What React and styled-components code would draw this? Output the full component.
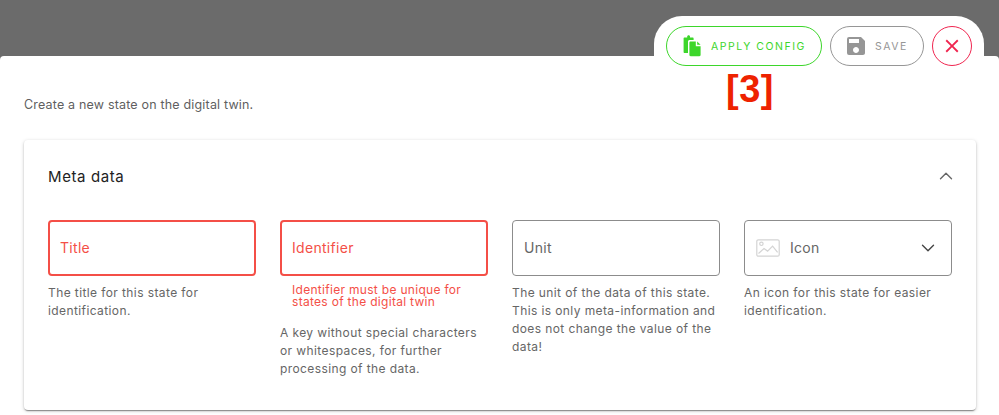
import { createGlobalStyle } from "styled-components";
import styled from "styled-components";
import { MdSave, MdClose } from "react-icons/md";
import { ChevronUp, ChevronDown } from "lucide-react";

const FONT = `Inter, "Open Sans", sans-serif`;
const ERROR = "#f44f47";

const GlobalStyle = createGlobalStyle`
  html, body {
    margin: 0;
    height: 100%;
    overflow: hidden;
    background: #6b6b6b;
    font-family: ${FONT};
  }
`;

const fields = [
  {
    label: "Title",
    error: true,
    hint: "The title for this state for identification.",
  },
  {
    label: "Identifier",
    error: true,
    message: "Identifier must be unique for states of the digital twin",
    hint: "A key without special characters or whitespaces, for further processing of the data.",
  },
  {
    label: "Unit",
    hint: "The unit of the data of this state. This is only meta-information and does not change the value of the data!",
  },
];

function PasteIcon() {
  return (
    <svg width="24" height="24" viewBox="0 0 24 24" fill="currentColor">
      <path d="M4.6 3.4h2.6V2.6c0-.8.6-1.4 1.4-1.4s1.4.6 1.4 1.4v.8h2.6c.6 0 1 .4 1 1V6H9.6C8.7 6 8 6.7 8 7.6V19H4.6c-.6 0-1-.4-1-1V4.4c0-.6.4-1 1-1z" />
      <path d="M10.6 7.6h5.2v4.6h4.8V21c0 .7-.5 1.2-1.2 1.2h-8.8c-.7 0-1.2-.5-1.2-1.2V8.8c0-.7.5-1.2 1.2-1.2z" />
      <path d="M17.2 7.6l3.4 3.2h-3.4z" />
    </svg>
  );
}

function ImageIcon() {
  return (
    <svg width="24" height="18" viewBox="0 0 24 18" fill="none" stroke="#d4d4d4" strokeWidth="1.2">
      <rect x="0.8" y="0.8" width="22.4" height="16.4" rx="1.5" />
      <circle cx="5.4" cy="4.8" r="1.7" />
      <path d="M2.5 14.5l5.5-5 3.6 2.6 5-5 5 6.2" />
    </svg>
  );
}

export default function App() {
  return (
    <Page>
      <GlobalStyle />
      <Sheet>
        <Actions>
          <ActionButton $color="#3dd62b" $width={156}>
            <PasteIcon />
            Apply config
          </ActionButton>
          <ActionButton $color="#969696" $width={94}>
            <MdSave size={24} />
            Save
          </ActionButton>
          <CloseButton>
            <MdClose size={22} />
          </CloseButton>
        </Actions>
        <Annotation>[3]</Annotation>
        <Description>Create a new state on the digital twin.</Description>
        <Panel>
          <PanelHeader>
            <PanelTitle>Meta data</PanelTitle>
            <CollapseIcon size={22} color="#666" strokeWidth={1.5} />
          </PanelHeader>
          <FieldGrid>
            {fields.map((field) => (
              <Field key={field.label}>
                <InputBox $error={field.error}>
                  <InputLabel $error={field.error}>{field.label}</InputLabel>
                </InputBox>
                {field.message && <ErrorText>{field.message}</ErrorText>}
                <Hint>{field.hint}</Hint>
              </Field>
            ))}
            <Field>
              <InputBox>
                <ImageIcon />
                <SelectLabel>Icon</SelectLabel>
                <ExpandIcon size={22} color="#444" strokeWidth={1.5} />
              </InputBox>
              <Hint>An icon for this state for easier identification.</Hint>
            </Field>
          </FieldGrid>
        </Panel>
      </Sheet>
    </Page>
  );
}

const Page = styled.div`
  height: 415px;
  padding-top: 56px;
  box-sizing: border-box;
  overflow: hidden;
  background: #6b6b6b;
`;

const Sheet = styled.main`
  position: relative;
  height: 359px;
  padding: 40px 23px 0 24px;
  box-sizing: border-box;
  background: #fff;
  border-radius: 4px 4px 0 0;
`;

const Actions = styled.div`
  position: absolute;
  top: -40px;
  right: 15px;
  display: flex;
  align-items: flex-start;
  gap: 8px;
  width: 330px;
  height: 40px;
  padding: 10px 12px 0;
  box-sizing: border-box;
  background: #fff;
  border-radius: 28px 28px 0 0;
`;

const ActionButton = styled.button`
  display: flex;
  align-items: center;
  gap: 7px;
  flex: none;
  width: ${(p) => p.$width}px;
  height: 40px;
  padding: 0 0 0 13px;
  box-sizing: border-box;
  background: #fff;
  border: 1px solid ${(p) => p.$color};
  border-radius: 20px;
  color: ${(p) => p.$color};
  font-family: ${FONT};
  font-size: 10.5px;
  letter-spacing: 1.5px;
  text-transform: uppercase;
  white-space: nowrap;
`;

const CloseButton = styled.button`
  display: flex;
  align-items: center;
  justify-content: center;
  flex: none;
  width: 40px;
  height: 40px;
  padding: 0;
  background: #fff;
  border: 1px solid #f0254f;
  border-radius: 50%;
  color: #f0254f;
`;

const Annotation = styled.div`
  position: absolute;
  top: 10px;
  left: 726px;
  color: #ee2200;
  font-family: "Liberation Sans", sans-serif;
  font-size: 38px;
  font-weight: 700;
  line-height: 46px;
  letter-spacing: 0.5px;
`;

const Description = styled.p`
  margin: 0;
  color: #5f5f5f;
  font-size: 12.5px;
  line-height: 18px;
  letter-spacing: 0.18px;
`;

const Panel = styled.section`
  margin-top: 26px;
  height: 270px;
  padding: 0 24px;
  box-sizing: border-box;
  background: #fff;
  border-radius: 4px;
  box-shadow: 0 2px 1px -1px rgba(0, 0, 0, 0.3), 0 1px 2px 0 rgba(0, 0, 0, 0.2),
    0 1px 4px 0 rgba(0, 0, 0, 0.14);
`;

const PanelHeader = styled.header`
  display: flex;
  align-items: center;
  justify-content: space-between;
  height: 72px;
`;

const CollapseIcon = styled(ChevronUp)`
  margin-right: -5px;
`;

const ExpandIcon = styled(ChevronDown)`
  margin-right: 1px;
`;

const PanelTitle = styled.h2`
  margin: 0;
  color: #222;
  font-size: 15px;
  font-weight: 400;
  letter-spacing: 0.6px;
`;

const FieldGrid = styled.div`
  display: grid;
  grid-template-columns: repeat(4, 208px);
  gap: 24px;
  margin-top: 8px;
`;

const Field = styled.div`
  display: flex;
  flex-direction: column;
`;

const InputBox = styled.div`
  display: flex;
  align-items: center;
  height: 56px;
  padding: 0 ${(p) => (p.$error ? 10 : 11)}px;
  box-sizing: border-box;
  border: ${(p) => (p.$error ? `2px solid ${ERROR}` : "1px solid #8c8c8c")};
  border-radius: 4px;
`;

const InputLabel = styled.span`
  margin-bottom: 1px;
  color: ${(p) => (p.$error ? ERROR : "#666")};
  font-size: 14px;
  letter-spacing: 0.3px;
`;

const SelectLabel = styled.span`
  flex: 1;
  margin-left: 10px;
  margin-bottom: 1px;
  color: #666;
  font-size: 14px;
  letter-spacing: 0.3px;
`;

const ErrorText = styled.div`
  margin: 8px 0 8px 12px;
  color: ${ERROR};
  font-size: 12px;
  line-height: 12px;
  letter-spacing: 0.3px;
`;

const Hint = styled.p`
  margin: 8px 0 0;
  color: #666;
  font-size: 12px;
  line-height: 18px;
  letter-spacing: 0.4px;
`;
